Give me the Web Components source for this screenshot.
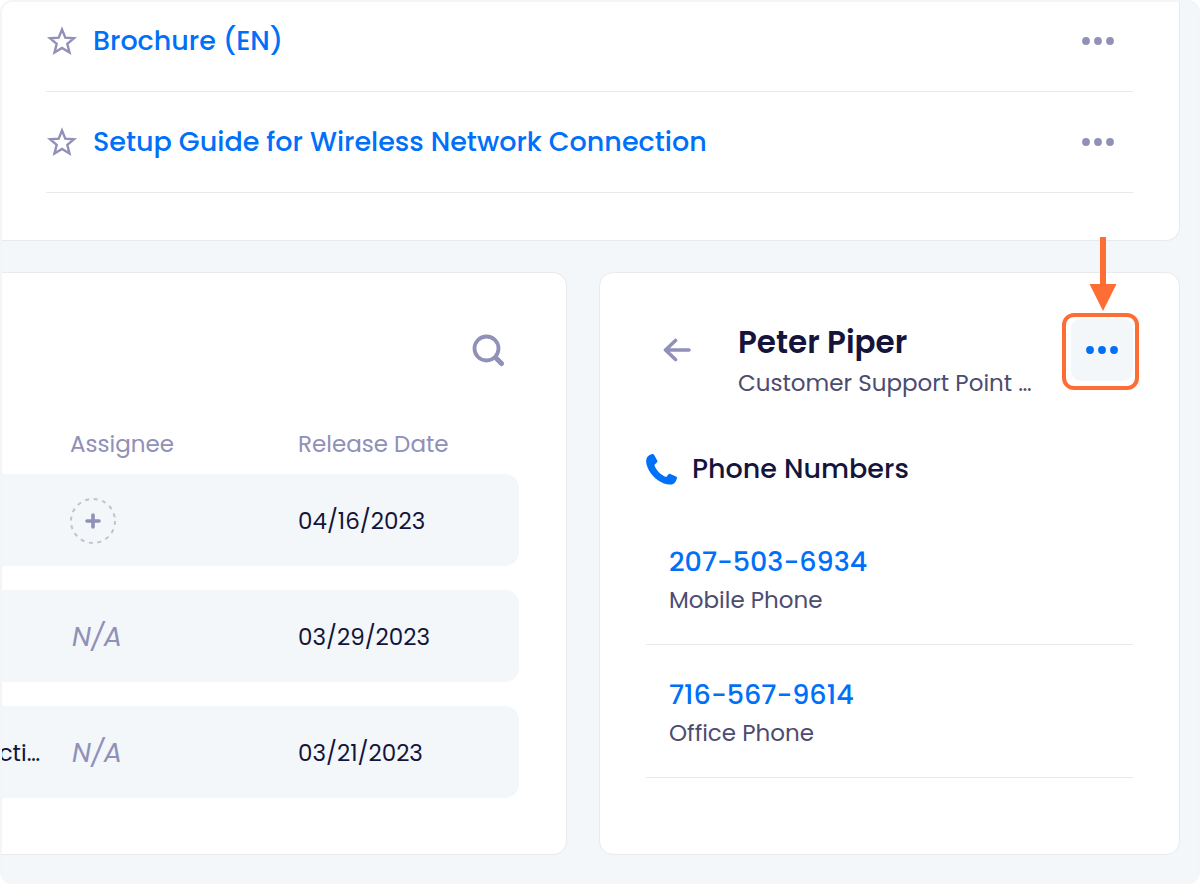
<!DOCTYPE html>
<html lang="en">
<head>
<meta charset="utf-8">
<meta name="viewport" content="width=device-width, initial-scale=1">
<title>Product workspace</title>
<style>
  :root {
    --blue: #0070f8;
    --ink: #14143c;
    --body: #4c4c70;
    --muted: #9090b8;
    --line: #e8eaee;
    --page: #f3f7fa;
    --accent: #fe6d33;
  }
  body { margin: 0; background: #fff; color: var(--ink); font-family: Poppins, Inter, sans-serif; font-size: 23px; }
</style>
</head>
<body>
<app-frame>
  <doc-list slot="top">
    <doc-row>Brochure (EN)</doc-row>
    <doc-row>Setup Guide for Wireless Network Connection</doc-row>
  </doc-list>
  <release-table></release-table>
  <contact-card>
    <span slot="name">Peter Piper</span>
    <span slot="role">Customer Support Point …</span>
    <phone-entry number="207-503-6934">Mobile Phone</phone-entry>
    <phone-entry number="716-567-9614">Office Phone</phone-entry>
  </contact-card>
</app-frame>
<script>
  const define = (name, html, setup) => customElements.define(name, class extends HTMLElement {
    constructor() {
      super();
      this.attachShadow({ mode: 'open' }).innerHTML = html;
    }
    connectedCallback() { if (setup) setup(this); }
  });

  const base = `<style>
    *, :host { box-sizing: border-box; }
    h2, h3, p, ul { margin: 0; padding: 0; }
    button { border: 0; padding: 0; margin: 0; background: none; font: inherit; color: inherit; cursor: pointer; display: grid; place-items: center; flex: none; }
    a { color: var(--blue); text-decoration: none; }
    svg { display: block; }
  </style>`;

  const dots = `<svg width="32" height="8" viewBox="0 0 32 8" fill="currentColor" aria-hidden="true"><circle cx="4" cy="4" r="3.900"/><circle cx="16" cy="4" r="3.900"/><circle cx="28" cy="4" r="3.900"/></svg>`;

  define('phone-entry', `${base}<style>
    :host { display: block; padding: 30px 0 26px 23px; border-bottom: 1px solid var(--line); }
    a { display: block; font-size: 27px; font-weight: 500; line-height: 40px; }
    p { line-height: 36px; color: var(--body); }
  </style><a></a><p><slot></slot></p>`, el => {
    const link = el.shadowRoot.querySelector('a');
    link.textContent = el.getAttribute('number');
    link.href = 'tel:' + el.getAttribute('number');
  });

  define('doc-row', `${base}<style>
    :host { display: flex; align-items: center; height: 101px; border-bottom: 1px solid var(--line); }
    a { flex: 1; margin-left: 15px; font-size: 27px; font-weight: 500; line-height: 40px; }
    button { width: 70px; height: 62px; color: var(--muted); }
    .star { width: 32px; height: 32px; }
  </style>
  <button class="star" aria-label="Add to favorites"><svg width="32" height="32" viewBox="0 0 32 32" fill="none" stroke="currentColor" stroke-width="2.400" aria-hidden="true"><path d="M16 4.500 L19.300 12.600 L28 13.200 L21.300 18.900 L23.500 27.500 L16 22.900 L8.500 27.500 L10.700 18.900 L4 13.200 L12.700 12.600 Z"/></svg></button>
  <a href="#"><slot></slot></a>
  <button aria-label="More actions">${dots}</button>`);

  define('doc-list', `${base}<style>
    :host { display: block; overflow: hidden; padding: 0 46px 47px 44px; background: #fff; border: solid var(--line); border-width: 0 1px 1px 0; border-radius: 0 0 14px 0; }
    .rows { margin-top: -11px; }
  </style><div class="rows"><slot></slot></div>`);

  define('release-table', `${base}<style>
    :host { display: block; padding: 46px 47px 56px 0; background: #fff; border: 1px solid var(--line); border-left: 0; border-radius: 0 14px 14px 0; }
    header { display: flex; justify-content: flex-end; }
    header button { width: 62px; height: 62px; color: var(--muted); }
    table { display: block; margin-top: 45px; }
    thead, tbody { display: grid; row-gap: 24px; }
    tr { display: grid; grid-template-columns: 68px 228px minmax(0, 1fr); align-items: center; }
    th { padding: 0; text-align: left; font-weight: 400; color: var(--muted); line-height: 36px; }
    tbody { margin-top: 12px; }
    tbody tr { height: 92px; background: var(--page); border-radius: 0 14px 14px 0; }
    td { padding: 2px 0 0; white-space: nowrap; }
    td:first-child { display: flex; justify-content: flex-end; padding-right: 30px; overflow: hidden; }
    em { margin-left: 2px; color: var(--muted); font-size: 27px; }
  </style>
  <header><button aria-label="Search"><svg width="34" height="34" viewBox="0 0 34 34" fill="none" stroke="currentColor" aria-hidden="true"><circle cx="15.500" cy="15.500" r="12" stroke-width="3.800"/><path d="M25 25 L30.500 30.500" stroke-width="5" stroke-linecap="round"/></svg></button></header>
  <table>
    <thead><tr><th></th><th>Assignee</th><th>Release Date</th></tr></thead>
    <tbody>
      <tr><td></td><td><button aria-label="Add assignee"><svg width="46" height="46" viewBox="0 0 46 46" fill="none" aria-hidden="true"><circle cx="23" cy="23" r="22" stroke="#c2c3c9" stroke-width="2" stroke-dasharray="4 4.640"/><path d="M23 17 V29 M17 23 H29" stroke="#9090b8" stroke-width="3.600" stroke-linecap="round"/></svg></button></td><td>04/16/2023</td></tr>
      <tr><td></td><td><em>N/A</em></td><td>03/29/2023</td></tr>
      <tr><td><span>cti…</span></td><td><em>N/A</em></td><td>03/21/2023</td></tr>
    </tbody>
  </table>`);

  define('callout-mark', `${base}<style>
    :host { display: block; position: absolute; inset: -6px -6px -9px -9px; border: 4px solid var(--accent); border-radius: 12px; pointer-events: none; }
    svg { position: absolute; left: 23px; bottom: 100%; margin-bottom: 6px; }
  </style><svg width="28" height="74" viewBox="0 0 28 74" fill="#fe6d33" aria-hidden="true"><path d="M11 0 H17 V47 H27.500 L14 74 L0.500 47 H11 Z"/></svg>`);

  define('contact-card', `${base}<style>
    :host { display: block; padding: 46px 46px 56px; background: #fff; border: 1px solid var(--line); border-radius: 14px; }
    header { display: flex; align-items: flex-start; }
    .back { width: 62px; height: 62px; color: var(--muted); }
    .who { flex: 1; min-width: 0; margin-left: 30px; }
    h2 { font-size: 31px; font-weight: 600; line-height: 46px; }
    .who p { line-height: 36px; color: var(--body); white-space: nowrap; }
    .menu { position: relative; flex: none; }
    .menu button { width: 62px; height: 62px; border-radius: 10px; background: var(--page); color: var(--blue); }
    h3 { display: flex; align-items: center; gap: 14px; margin-top: 48px; font-size: 27px; font-weight: 500; line-height: 40px; }
    .phones { margin-top: 23px; }
  </style>
  <header>
    <button class="back" aria-label="Back"><svg width="28" height="24" viewBox="0 0 28 24" fill="none" stroke="currentColor" stroke-width="3.600" stroke-linecap="round" stroke-linejoin="round" aria-hidden="true"><path d="M26 12 H2.500 M12.500 2.500 L2.500 12 L12.500 21.500"/></svg></button>
    <div class="who"><h2><slot name="name"></slot></h2><p><slot name="role"></slot></p></div>
    <div class="menu"><button aria-label="Contact actions">${dots}</button><callout-mark></callout-mark></div>
  </header>
  <h3><svg width="32" height="32" viewBox="0 0 32 32" fill="#0070f8" aria-hidden="true"><path d="M1 4.500 C2.500 2.500 4.800 1 6.800 1 C7.500 1 7.900 1.400 8.200 2 L11.200 7.400 C11.600 8.200 11.400 8.800 10.800 9.400 L8.300 12 C10 17.300 14.800 22 20.300 24 L22.500 21.300 C23 20.700 23.600 20.600 24.300 20.900 L30 23.500 C30.800 23.900 31.100 24.500 30.900 25.300 C30.400 27.900 29 30 27.200 31 C25 31.900 21.500 31.800 18 30.500 C9.500 27.300 2.700 19.600 0.600 11.500 C-0.100 8.800 0 6.300 1 4.500 Z"/></svg>Phone Numbers</h3>
  <div class="phones"><slot></slot></div>`);

  define('app-frame', `${base}<style>
    :host { display: block; min-height: 100vh; padding: 0 18px 27px 0; background: var(--page); border: 2px solid #f5f5f7; border-radius: 12px; overflow: hidden; }
    main { display: grid; row-gap: 31px; }
    .pair { display: grid; grid-template-columns: minmax(0, 565fr) minmax(0, 581fr); column-gap: 32px; }
  </style>
  <main><slot name="top"></slot><div class="pair"><slot></slot></div></main>`);
</script>
</body>
</html>
